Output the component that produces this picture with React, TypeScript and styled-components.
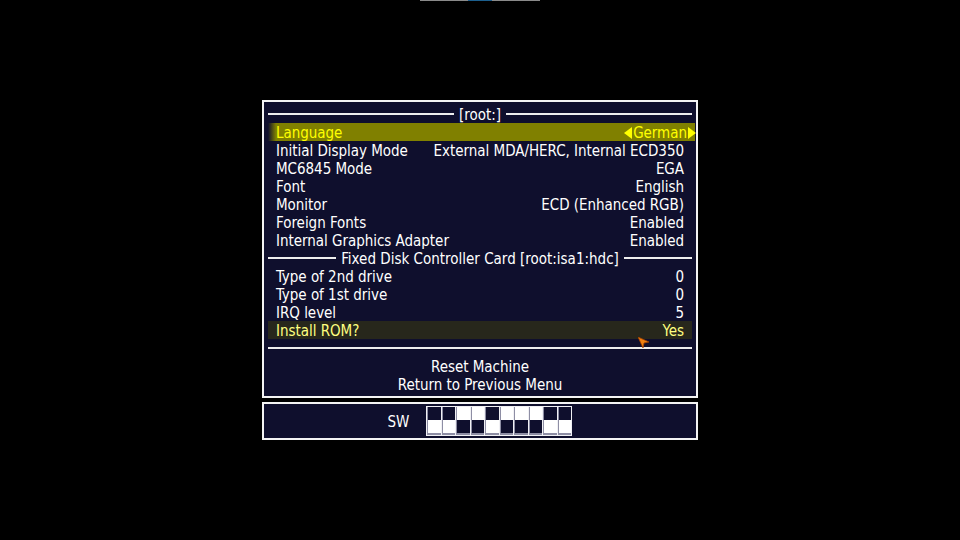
import styled, { createGlobalStyle } from 'styled-components';

const GlobalStyle = createGlobalStyle`
  html, body {
    margin: 0;
    padding: 0;
    background: #000;
  }
  body {
    font-family: "DejaVu Sans Condensed", "DejaVu Sans", sans-serif;
    font-stretch: condensed;
  }
`;

const NAVY = '#0f0f2d';

type Item = { label: string; value?: string; kind?: 'header' | 'item' };

const items: Item[] = [
  { label: 'Language', value: 'German' },
  { label: 'Initial Display Mode', value: 'External MDA/HERC, Internal ECD350' },
  { label: 'MC6845 Mode', value: 'EGA' },
  { label: 'Font', value: 'English' },
  { label: 'Monitor', value: 'ECD (Enhanced RGB)' },
  { label: 'Foreign Fonts', value: 'Enabled' },
  { label: 'Internal Graphics Adapter', value: 'Enabled' },
  { label: 'Fixed Disk Controller Card [root:isa1:hdc]', kind: 'header' },
  { label: 'Type of 2nd drive', value: '0' },
  { label: 'Type of 1st drive', value: '0' },
  { label: 'IRQ level', value: '5' },
  { label: 'Install ROM?', value: 'Yes' },
];

// switch positions: true = up
const dips = [false, false, true, true, false, true, true, true, false, false];

const Screen = styled.div`
  position: relative;
  width: 960px;
  height: 540px;
  display: flex;
  flex-direction: column;
  align-items: center;
  color: #fff;
  font-size: 15px;
`;

const TopBar = styled.div`
  width: 120px;
  height: 1px;
  background: linear-gradient(to right, #8a8a8a 48px, #1c5f8e 48px, #1c5f8e 72px, #8a8a8a 72px);
`;

const Panel = styled.div<{ $top: number }>`
  box-sizing: border-box;
  width: 436px;
  margin-top: ${(p) => p.$top}px;
  border: 2px solid #f4f4f4;
  background: ${NAVY};
`;

const MenuBody = styled.div`
  position: relative;
  padding: 3px 0;
`;

const Row = styled.div<{ $state?: 'selected' | 'hover' }>`
  height: 18px;
  margin: 0 4px;
  padding: 0 8px;
  display: flex;
  align-items: center;
  justify-content: space-between;
  white-space: nowrap;
  line-height: 18px;
  letter-spacing: -0.03px;
  color: ${(p) => (p.$state === 'selected' ? '#ffff00' : p.$state === 'hover' ? '#ffff80' : '#fff')};
  background: ${(p) =>
    p.$state === 'selected'
      ? 'linear-gradient(to right, rgba(128,128,0,0) 0, #808000 8px)'
      : p.$state === 'hover'
      ? '#27271c'
      : 'transparent'};
  margin-right: ${(p) => (p.$state === 'selected' ? '1px' : '4px')};
`;

const CenterRow = styled(Row)`
  justify-content: center;
`;

const Text = styled.span`
  display: flex;
  align-items: center;
  padding-top: 2px;
`;

const Heading = styled.div`
  height: 18px;
  margin: 0 4px;
  display: flex;
  align-items: center;
  gap: 5px;
  white-space: nowrap;
  line-height: 18px;
`;

const Rule = styled.div`
  flex: 1;
  height: 2px;
  background: #eeeeee;
`;

const Divider = styled.div`
  height: 18px;
  margin: 0 4px;
  display: flex;
  align-items: center;
`;

const Arrow = styled.svg<{ $right?: boolean }>`
  width: 8px;
  height: 12px;
  margin-right: ${(p) => (p.$right ? '-9px' : '1px')};
  margin-left: ${(p) => (p.$right ? '1px' : '-1px')};
  fill: #ffff00;
`;

const Cursor = styled.svg`
  position: absolute;
  left: 374px;
  top: 235px;
  width: 12px;
  height: 12px;
`;

const SwitchPanel = styled(Panel)`
  height: 38px;
  display: flex;
  align-items: center;
  justify-content: center;
  gap: 17px;
`;

const SwLabel = styled.span`
  font-size: 15px;
  padding-top: 2px;
`;

const DipBox = styled.div`
  display: flex;
  gap: 1px;
  width: 146px;
  height: 30px;
  box-sizing: border-box;
  border: 1px solid #f0f0f4;
  background: #f0f0f4;
`;

const Switch = styled.div<{ $up: boolean }>`
  flex: 1;
  display: flex;
  flex-direction: column;
  justify-content: ${(p) => (p.$up ? 'flex-start' : 'flex-end')};
  background: ${NAVY};
  border-left: 1px solid #8e8ea4;
  border-bottom: 2px solid #8e8ea4;
`;

const Knob = styled.div`
  height: 13px;
  background: #fff;
`;

export default function App() {
  return (
    <>
      <GlobalStyle />
      <Screen>
        <TopBar />
        <Panel $top={99}>
          <MenuBody>
            <Heading>
              <Rule />
              <Text>[root:]</Text>
              <Rule />
            </Heading>
            {items.map((it, i) =>
              it.kind === 'header' ? (
                <Heading key={i}>
                  <Rule />
                  <Text>{it.label}</Text>
                  <Rule />
                </Heading>
              ) : (
                <Row key={i} $state={i === 0 ? 'selected' : i === items.length - 1 ? 'hover' : undefined}>
                  <Text>{it.label}</Text>
                  {i === 0 ? (
                    <Text>
                      <Arrow viewBox="0 0 8 12">
                        <polygon points="8,0 8,12 0,6" />
                      </Arrow>
                      {it.value}
                      <Arrow $right viewBox="0 0 8 12">
                        <polygon points="0,0 0,12 8,6" />
                      </Arrow>
                    </Text>
                  ) : (
                    <Text>{it.value}</Text>
                  )}
                </Row>
              )
            )}
            <Divider>
              <Rule />
            </Divider>
            <CenterRow>
              <Text>Reset Machine</Text>
            </CenterRow>
            <CenterRow>
              <Text>Return to Previous Menu</Text>
            </CenterRow>
            <Cursor viewBox="0 0 12 12">
              <polygon points="0,0 11,5 6,6 5,11" fill="#f08010" stroke="#a04000" strokeWidth="0.8" />
            </Cursor>
          </MenuBody>
        </Panel>
        <SwitchPanel $top={4}>
          <SwLabel>SW</SwLabel>
          <DipBox>
            {dips.map((up, i) => (
              <Switch key={i} $up={up}>
                <Knob />
              </Switch>
            ))}
          </DipBox>
        </SwitchPanel>
      </Screen>
    </>
  );
}
